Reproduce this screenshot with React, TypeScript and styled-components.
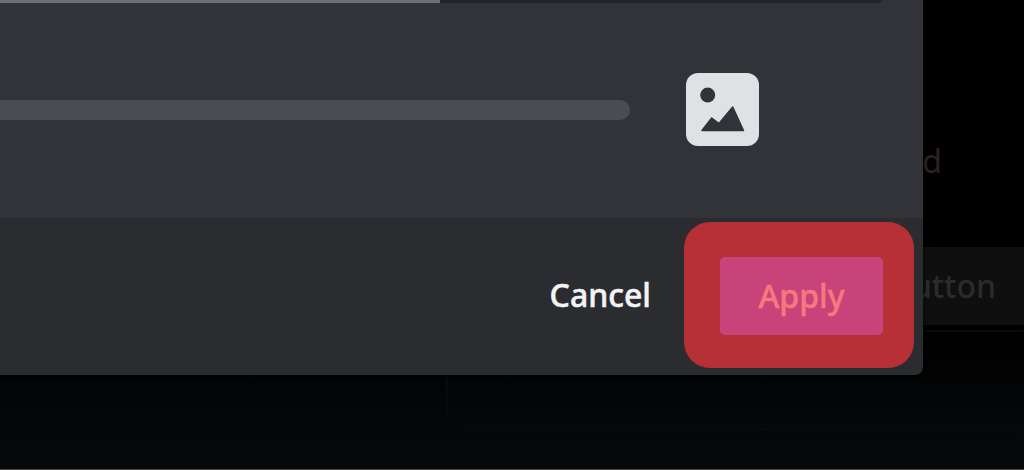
import React from "react";
import styled, { createGlobalStyle } from "styled-components";

const Global = createGlobalStyle`
  html, body { margin: 0; padding: 0; background: #040506; }
  #root { width: 1024px; height: 470px; }
`;

const Page = styled.div`
  position: relative;
  width: 1024px;
  height: 470px;
  overflow: hidden;
  background: linear-gradient(180deg, #000000 0%, #000000 70%, #07090b 100%);
  font-family: "Noto Sans", "Open Sans", sans-serif;
  border-bottom: 1px solid #444444;
  box-sizing: border-box;
`;

const BackContent = styled.div`
  display: flex;
  flex-direction: column;
  align-items: flex-end;
  height: 100%;
  padding: 141px 0 0 0;
  box-sizing: border-box;
`;

const BackLabel = styled.div`
  font-size: 32px;
  line-height: 40px;
  color: #2a2122;
  padding-right: 82px;
`;

const BackButton = styled.div`
  margin-top: 66px;
  height: 78px;
  width: 140px;
  background: #0f0f10;
  color: #2b2b2d;
  font-size: 32px;
  font-weight: 500;
  display: flex;
  align-items: center;
  justify-content: flex-end;
  padding: 0 28px 2px 0;
  box-sizing: border-box;
`;

const BackCard = styled.div`
  position: absolute;
  left: 446px;
  top: 330px;
  width: 640px;
  height: 100px;
  border: 2px solid #08090a;
  border-radius: 16px;
  box-sizing: border-box;
`;

const Modal = styled.div`
  position: absolute;
  left: 0;
  top: 0;
  width: 923px;
  height: 375px;
  display: flex;
  flex-direction: column;
  border-radius: 0 0 8px 0;
  overflow: hidden;
  box-shadow: 0 0 4px rgba(0, 0, 0, 0.6);
`;

const Body = styled.div`
  height: 218px;
  background: #323338;
  display: flex;
  flex-direction: column;
`;

const Cropper = styled.div`
  width: 882px;
  height: 3px;
  background: #222328;
  border-radius: 0 0 4px 0;
  overflow: hidden;
  flex: none;
`;

const CropperFill = styled.div`
  height: 100%;
  background: #6d7078;
`;

const SliderRow = styled.div`
  display: flex;
  align-items: center;
  margin-top: 70px;
  padding-right: 164px;
`;

const Track = styled.div`
  flex: 1;
  height: 20px;
  background: #4a4c54;
  border-radius: 0 10px 10px 0;
`;

const IconButton = styled.div`
  width: 73px;
  height: 73px;
  margin-left: 56px;
  flex: none;
`;

const Footer = styled.div`
  flex: 1;
  background: #2b2c30;
  display: flex;
  justify-content: flex-end;
  align-items: flex-start;
  padding: 4px 9px 7px 0;
  box-sizing: border-box;
`;

const Cancel = styled.div`
  align-self: center;
  margin: 0 33px 0 0;
  color: #f2f3f5;
  font-size: 32px;
  font-weight: 500;
  line-height: 40px;
  -webkit-text-stroke: 0.5px currentColor;
`;

const Highlight = styled.div`
  width: 230px;
  height: 146px;
  background: #b63035;
  border-radius: 26px;
  padding: 35px 31px 33px 36px;
  box-sizing: border-box;
`;

const ApplyButton = styled.div`
  height: 78px;
  background: #c8437a;
  border-radius: 5px;
  color: #f9777f;
  font-size: 32px;
  font-weight: 500;
  display: flex;
  align-items: center;
  justify-content: center;
  padding-bottom: 2px;
  box-sizing: border-box;
  -webkit-text-stroke: 0.5px currentColor;
`;

const ImageIcon = () => (
  <svg width="73" height="73" viewBox="0 0 73 73">
    <rect width="73" height="73" rx="12" fill="#dfe1e5" />
    <circle cx="21.7" cy="22" r="7.5" fill="#323338" />
    <path
      d="M16 57.5 L25.7 45 L33 50.5 L46.7 34 L57.5 57.5 Z"
      fill="#323338"
      stroke="#323338"
      strokeWidth="1.5"
      strokeLinejoin="round"
    />
  </svg>
);

export default function App() {
  return (
    <Page>
      <Global />
      <BackContent>
        <BackLabel>d</BackLabel>
        <BackButton>Button</BackButton>
      </BackContent>
      <BackCard />
      <Modal>
        <Body>
          <Cropper>
            <CropperFill style={{ width: `${(440 / 882) * 100}%` }} />
          </Cropper>
          <SliderRow>
            <Track />
            <IconButton>
              <ImageIcon />
            </IconButton>
          </SliderRow>
        </Body>
        <Footer>
          <Cancel>Cancel</Cancel>
          <Highlight>
            <ApplyButton>Apply</ApplyButton>
          </Highlight>
        </Footer>
      </Modal>
    </Page>
  );
}
